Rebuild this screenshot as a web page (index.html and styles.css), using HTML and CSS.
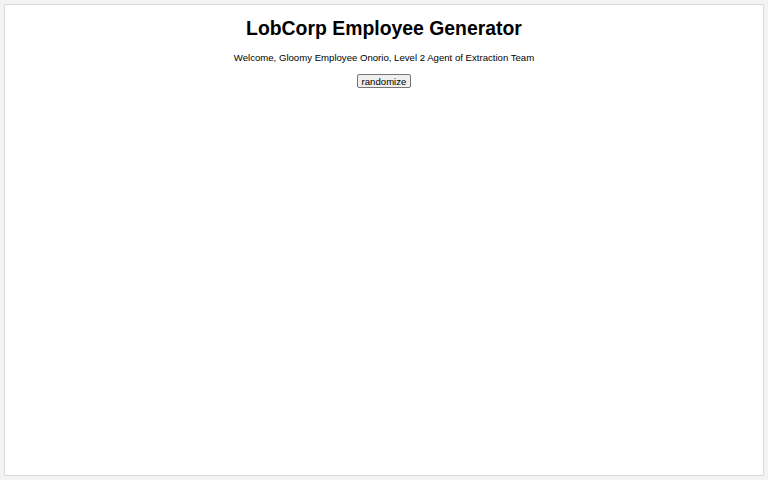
FILE: index.html
```html
<!DOCTYPE html>
<html lang="en">
<head>
    <meta charset="UTF-8">
    <meta name="viewport" content="width=device-width, initial-scale=1.0">
    <title>LobCorp Employee Generator</title>
    <link rel="stylesheet" href="styles.css">
</head>
<body>
    <div class="container">
        <h1 class="title">LobCorp Employee Generator</h1>
        <p id="employee" class="employee">Welcome, Gloomy Employee Onorio, Level 2 Agent of Extraction Team</p>
        <button class="button">randomize</button>
    </div>
</body>
</html>
```

FILE: styles.css
```css
body {
    font-family: 'Liberation Sans', Arial, sans-serif;
    background-color: #f3f3f3;
    color: #000;
    margin: 0;
    padding: 4px;
    box-sizing: border-box;
    height: 100vh;
}

.container {
    background-color: #fff;
    border: 1px solid #dcdcdc;
    height: 100%;
    box-sizing: border-box;
    text-align: center;
    padding-top: 12px;
}

.title {
    font-size: 19.4px;
    line-height: 22px;
    font-weight: bold;
    margin: 0 0 13px;
}

.employee {
    font-size: 9.6px;
    line-height: 11px;
    margin: 0 0 11px;
}

.button {
    display: block;
    margin: 0 auto;
    font-family: 'Liberation Sans', Arial, sans-serif;
    font-size: 9.6px;
    line-height: 11px;
    padding: 1px 4px 0;
    background-color: #efefef;
    border: 1px solid #767676;
    border-radius: 2px;
    color: #000;
}
```
